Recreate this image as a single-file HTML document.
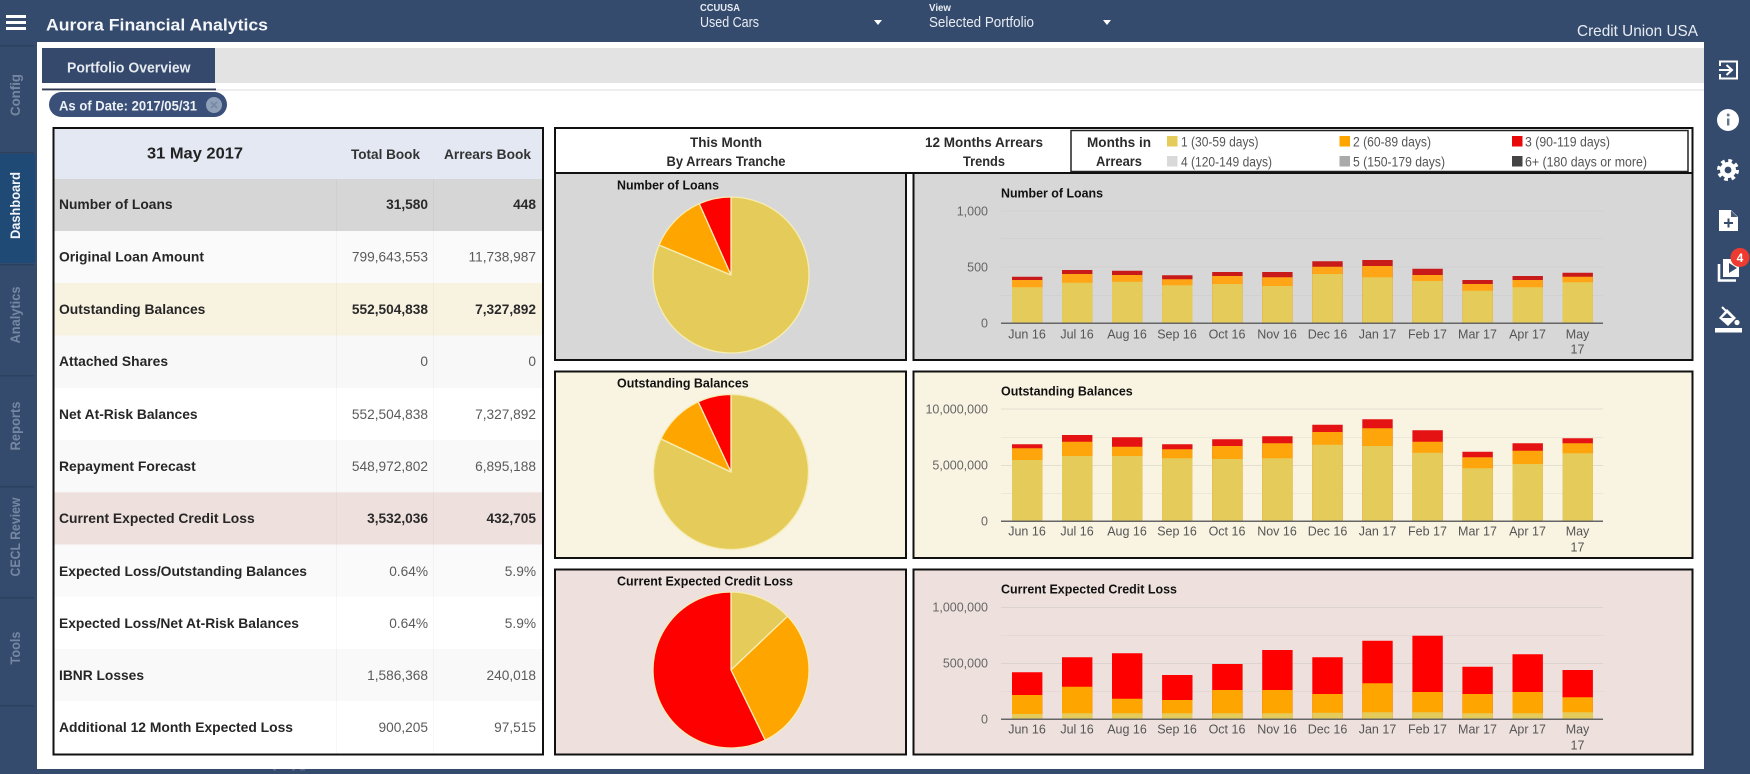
<!DOCTYPE html>
<html lang="en"><head><meta charset="utf-8"><title>Aurora Financial Analytics</title>
<style>
html,body{margin:0;padding:0;width:1750px;height:774px;overflow:hidden;background:#354b6d}
svg{display:block;filter:blur(.3px)}
text{font-family:"Liberation Sans",Arial,sans-serif}
.lb{font-size:14px;font-weight:700;fill:#262626}
.v{font-size:13.7px;fill:#5a5a5a;text-anchor:end}
.vb{font-size:13.7px;font-weight:700;fill:#2a2a2a;text-anchor:end}
.t{font-size:13px;font-weight:700;fill:#111}
.h{font-size:14px;font-weight:700;fill:#2b2b2b;text-anchor:middle}
.lg{font-size:13.5px;fill:#555}
.x{font-size:12.5px;fill:#555;text-anchor:middle}
.y{font-size:12.5px;fill:#666;text-anchor:end}
.nav{font-size:14px;font-weight:700;fill:#7687a2;text-anchor:middle}
</style></head><body>
<svg width="1750" height="774" viewBox="0 0 1750 774" xmlns="http://www.w3.org/2000/svg">
<rect width="1750" height="774" fill="#354b6d"/>
<rect x="37" y="42" width="1667" height="727" fill="#fff"/>
<!-- left nav -->
<rect x="0" y="154" width="35" height="109" fill="#1f4a75"/>
<g fill="#2c4060"><rect x="0" y="45" width="34" height="1.5"/><rect x="0" y="152" width="34" height="1.5"/><rect x="0" y="264" width="34" height="1.5"/><rect x="0" y="375" width="34" height="1.5"/><rect x="0" y="486" width="34" height="1.5"/><rect x="0" y="597" width="34" height="1.5"/><rect x="0" y="705" width="34" height="1.5"/></g>
<g fill="#fff"><rect x="6" y="15" width="20" height="3"/><rect x="6" y="21" width="20" height="3"/><rect x="6" y="27" width="20" height="3"/></g>
<text class="nav" transform="translate(20,95) rotate(-90)" textLength="42" lengthAdjust="spacingAndGlyphs">Config</text>
<text class="nav" transform="translate(20,205.5) rotate(-90)" textLength="67" lengthAdjust="spacingAndGlyphs" style="fill:#f2f5f9">Dashboard</text>
<text class="nav" transform="translate(20,315) rotate(-90)" textLength="57" lengthAdjust="spacingAndGlyphs">Analytics</text>
<text class="nav" transform="translate(20,426) rotate(-90)" textLength="49" lengthAdjust="spacingAndGlyphs">Reports</text>
<text class="nav" transform="translate(20,537) rotate(-90)" textLength="79" lengthAdjust="spacingAndGlyphs">CECL Review</text>
<text class="nav" transform="translate(20,648) rotate(-90)" textLength="33" lengthAdjust="spacingAndGlyphs">Tools</text>
<!-- header -->
<text x="46" y="30.5" font-size="16.5" font-weight="700" fill="#f4f6f9" textLength="222" lengthAdjust="spacingAndGlyphs">Aurora Financial Analytics</text>
<text x="700" y="11" font-size="10" font-weight="700" fill="#e8ecf2" textLength="40" lengthAdjust="spacingAndGlyphs">CCUUSA</text>
<text x="700" y="27" font-size="14.5" fill="#e8ecf2" textLength="59" lengthAdjust="spacingAndGlyphs">Used Cars</text>
<path d="M874 20h8l-4 5z" fill="#fff"/>
<text x="929" y="11" font-size="10" font-weight="700" fill="#e8ecf2" textLength="22" lengthAdjust="spacingAndGlyphs">View</text>
<text x="929" y="27" font-size="14.5" fill="#e8ecf2" textLength="105" lengthAdjust="spacingAndGlyphs">Selected Portfolio</text>
<path d="M1103 20h8l-4 5z" fill="#fff"/>
<text x="1577" y="36" font-size="16" fill="#e8ecf2" textLength="121" lengthAdjust="spacingAndGlyphs">Credit Union USA</text>
<!-- tabs -->
<rect x="215" y="48" width="1489" height="35" fill="#e3e3e3"/>
<rect x="42" y="48" width="173" height="35" fill="#34496b"/>
<rect x="42" y="89" width="1662" height="2" fill="#eeeeee"/>
<rect x="42" y="88.5" width="174" height="1.8" fill="#2f3d52"/>
<text x="67" y="72.5" font-size="14.5" font-weight="700" fill="#e6eaf0" textLength="123.5" lengthAdjust="spacingAndGlyphs">Portfolio Overview</text>
<rect x="49" y="92" width="178" height="25" rx="12.5" fill="#3a5078"/>
<text x="59" y="110.5" font-size="14" font-weight="700" fill="#eef1f5" textLength="138" lengthAdjust="spacingAndGlyphs">As of Date: 2017/05/31</text>
<circle cx="214" cy="105" r="8" fill="#8fa0b8"/><path d="M211 102l6 6M217 102l-6 6" stroke="#7688a3" stroke-width="1.6"/>
<!-- table backgrounds -->
<rect x="54" y="129" width="488" height="50" fill="#e3e8f3"/>
<rect x="54" y="179" width="488" height="52" fill="#d6d6d6"/>
<rect x="54" y="231" width="488" height="52" fill="#fafafa"/>
<rect x="54" y="283" width="488" height="52.5" fill="#f8f2e0"/>
<rect x="54" y="335.5" width="488" height="52.5" fill="#f8f8f8"/>
<rect x="54" y="388" width="488" height="52" fill="#fff"/>
<rect x="54" y="440" width="488" height="52.3" fill="#f9f9f9"/>
<rect x="54" y="492.3" width="488" height="52.2" fill="#eee0dd"/>
<rect x="54" y="544.5" width="488" height="52" fill="#fafafa"/>
<rect x="54" y="596.5" width="488" height="52.5" fill="#fff"/>
<rect x="54" y="649" width="488" height="52" fill="#f9f9f9"/>
<rect x="54" y="701" width="488" height="53" fill="#fff"/>
<rect x="336" y="179" width="1" height="575" fill="#000" opacity=".03"/>
<rect x="433" y="179" width="1" height="575" fill="#000" opacity=".03"/>
<rect x="53.5" y="128" width="489.5" height="626.5" fill="none" stroke="#111" stroke-width="2"/>
<text x="195" y="158.5" font-size="16" font-weight="700" fill="#222" text-anchor="middle" textLength="96" lengthAdjust="spacingAndGlyphs">31 May 2017</text>
<text x="385.5" y="159" font-size="14" font-weight="700" fill="#333" text-anchor="middle" textLength="69" lengthAdjust="spacingAndGlyphs">Total Book</text>
<text x="487.5" y="159" font-size="14" font-weight="700" fill="#333" text-anchor="middle" textLength="87" lengthAdjust="spacingAndGlyphs">Arrears Book</text>
<text class="lb" x="59" y="209" textLength="113.6" lengthAdjust="spacingAndGlyphs">Number of Loans</text><text class="vb" x="428" y="209">31,580</text><text class="vb" x="536" y="209">448</text>
<text class="lb" x="59" y="261.5" textLength="145" lengthAdjust="spacingAndGlyphs">Original Loan Amount</text><text class="v" x="428" y="261.5">799,643,553</text><text class="v" x="536" y="261.5">11,738,987</text>
<text class="lb" x="59" y="314" textLength="146.4" lengthAdjust="spacingAndGlyphs">Outstanding Balances</text><text class="vb" x="428" y="314">552,504,838</text><text class="vb" x="536" y="314">7,327,892</text>
<text class="lb" x="59" y="366" textLength="109" lengthAdjust="spacingAndGlyphs">Attached Shares</text><text class="v" x="428" y="366">0</text><text class="v" x="536" y="366">0</text>
<text class="lb" x="59" y="419" textLength="138.6" lengthAdjust="spacingAndGlyphs">Net At-Risk Balances</text><text class="v" x="428" y="419">552,504,838</text><text class="v" x="536" y="419">7,327,892</text>
<text class="lb" x="59" y="471" textLength="136.8" lengthAdjust="spacingAndGlyphs">Repayment Forecast</text><text class="v" x="428" y="471">548,972,802</text><text class="v" x="536" y="471">6,895,188</text>
<text class="lb" x="59" y="523" textLength="195.7" lengthAdjust="spacingAndGlyphs">Current Expected Credit Loss</text><text class="vb" x="428" y="523">3,532,036</text><text class="vb" x="536" y="523">432,705</text>
<text class="lb" x="59" y="576" textLength="248" lengthAdjust="spacingAndGlyphs">Expected Loss/Outstanding Balances</text><text class="v" x="428" y="576">0.64%</text><text class="v" x="536" y="576">5.9%</text>
<text class="lb" x="59" y="628" textLength="240" lengthAdjust="spacingAndGlyphs">Expected Loss/Net At-Risk Balances</text><text class="v" x="428" y="628">0.64%</text><text class="v" x="536" y="628">5.9%</text>
<text class="lb" x="59" y="680" textLength="85" lengthAdjust="spacingAndGlyphs">IBNR Losses</text><text class="v" x="428" y="680">1,586,368</text><text class="v" x="536" y="680">240,018</text>
<text class="lb" x="59" y="732" textLength="234" lengthAdjust="spacingAndGlyphs">Additional 12 Month Expected Loss</text><text class="v" x="428" y="732">900,205</text><text class="v" x="536" y="732">97,515</text>
<!-- header strip -->
<rect x="555" y="128" width="1137.5" height="45" fill="#fff" stroke="#111" stroke-width="2"/>
<text class="h" x="726" y="147" textLength="72" lengthAdjust="spacingAndGlyphs">This Month</text>
<text class="h" x="726" y="166" textLength="119" lengthAdjust="spacingAndGlyphs">By Arrears Tranche</text>
<text class="h" x="984" y="147" textLength="118" lengthAdjust="spacingAndGlyphs">12 Months Arrears</text>
<text class="h" x="984" y="166" textLength="42" lengthAdjust="spacingAndGlyphs">Trends</text>
<rect x="1071" y="130.5" width="617" height="41" fill="#fff" stroke="#222" stroke-width="1.5"/>
<text class="h" x="1119" y="147" textLength="64" lengthAdjust="spacingAndGlyphs">Months in</text>
<text class="h" x="1119" y="166" textLength="46" lengthAdjust="spacingAndGlyphs">Arrears</text>
<rect x="1167" y="136" width="10.5" height="10.5" fill="#e5cc5a"/><text class="lg" x="1181" y="146.5" textLength="77.5" lengthAdjust="spacingAndGlyphs">1 (30-59 days)</text>
<rect x="1339.5" y="136" width="10.5" height="10.5" fill="#ffa500"/><text class="lg" x="1353" y="146.5" textLength="78" lengthAdjust="spacingAndGlyphs">2 (60-89 days)</text>
<rect x="1512" y="136" width="10.5" height="10.5" fill="#e80a0a"/><text class="lg" x="1525" y="146.5" textLength="85" lengthAdjust="spacingAndGlyphs">3 (90-119 days)</text>
<rect x="1167" y="156" width="10.5" height="10.5" fill="#d9d9d9"/><text class="lg" x="1181" y="166.5" textLength="91" lengthAdjust="spacingAndGlyphs">4 (120-149 days)</text>
<rect x="1339.5" y="156" width="10.5" height="10.5" fill="#aaaaaa"/><text class="lg" x="1353" y="166.5" textLength="92" lengthAdjust="spacingAndGlyphs">5 (150-179 days)</text>
<rect x="1512" y="156" width="10.5" height="10.5" fill="#444444"/><text class="lg" x="1525" y="166.5" textLength="122" lengthAdjust="spacingAndGlyphs">6+ (180 days or more)</text>
<!-- panels -->
<g stroke="#111" stroke-width="2">
<rect x="555" y="173" width="351" height="187" fill="#d7d7d7"/>
<rect x="913.5" y="173" width="779" height="187" fill="#d7d7d7"/>
<rect x="555" y="371.5" width="351" height="186.5" fill="#f9f3e1"/>
<rect x="913.5" y="371.5" width="779" height="186.5" fill="#f9f3e1"/>
<rect x="555" y="569.5" width="351" height="185" fill="#eee1dd"/>
<rect x="913.5" y="569.5" width="779" height="185" fill="#eee1dd"/>
</g>
<!-- pies -->
<text class="t" x="617" y="189.5" textLength="102" lengthAdjust="spacingAndGlyphs">Number of Loans</text>
<g stroke="#f6edb5" stroke-width="1.3" stroke-linejoin="round">
<path d="M731 275L731 197A78 78 0 1 1 659 245Z" fill="#e5cc5a"/>
<path d="M731 275L659 245A78 78 0 0 1 699.3 203.7Z" fill="#ffa500"/>
<path d="M731 275L699.3 203.7A78 78 0 0 1 731 197Z" fill="#f00"/>
</g>
<text class="t" x="617" y="387.5" textLength="131.7" lengthAdjust="spacingAndGlyphs">Outstanding Balances</text>
<g stroke="#f6edb5" stroke-width="1.3" stroke-linejoin="round">
<path d="M731 472L731 394.5A77.5 77.5 0 1 1 660.9 438.9Z" fill="#e5cc5a"/>
<path d="M731 472L660.9 438.9A77.5 77.5 0 0 1 698.2 401.8Z" fill="#ffa500"/>
<path d="M731 472L698.2 401.8A77.5 77.5 0 0 1 731 394.5Z" fill="#f00"/>
</g>
<text class="t" x="617" y="585.5" textLength="176" lengthAdjust="spacingAndGlyphs">Current Expected Credit Loss</text>
<g stroke="#f6edb5" stroke-width="1.3" stroke-linejoin="round">
<path d="M731 670L731 592A78 78 0 0 1 787.6 616.3Z" fill="#e5cc5a"/>
<path d="M731 670L787.6 616.3A78 78 0 0 1 765.2 740.1Z" fill="#ffa500"/>
<path d="M731 670L765.2 740.1A78 78 0 1 1 731 592Z" fill="#f00"/>
</g>
<!-- chart 1 -->
<text class="t" x="1001" y="197.5" textLength="102" lengthAdjust="spacingAndGlyphs">Number of Loans</text>
<g fill="#d1d1d1"><rect x="1001" y="210.5" width="602" height="1"/><rect x="1001" y="238" width="602" height="1"/><rect x="1001" y="266.5" width="602" height="1"/><rect x="1001" y="295" width="602" height="1"/></g>
<text class="y" x="988" y="215.5">1,000</text><text class="y" x="988" y="271.5">500</text><text class="y" x="988" y="327.5">0</text>
<path fill="#c91a1a" d="M1012 276.7h30.4V323h-30.4zM1062 270h30.4V323h-30.4zM1112 270.7h30.4V323h-30.4zM1162.1 275.3h30.4V323h-30.4zM1212.2 272h30.4V323h-30.4zM1262.2 272h30.4V323h-30.4zM1312.3 261.3h30.4V323h-30.4zM1362.3 260h30.4V323h-30.4zM1412.4 268.7h30.4V323h-30.4zM1462.4 280h30.4V323h-30.4zM1512.5 276h30.4V323h-30.4zM1562.5 272.7h30.4V323h-30.4z"/>
<path fill="#ffa516" d="M1012 280h30.4V323h-30.4zM1062 274h30.4V323h-30.4zM1112 275h30.4V323h-30.4zM1162.1 279.3h30.4V323h-30.4zM1212.2 276h30.4V323h-30.4zM1262.2 277.3h30.4V323h-30.4zM1312.3 266.7h30.4V323h-30.4zM1362.3 266h30.4V323h-30.4zM1412.4 275h30.4V323h-30.4zM1462.4 284h30.4V323h-30.4zM1512.5 280h30.4V323h-30.4zM1562.5 276.7h30.4V323h-30.4z"/>
<path fill="#e5cc5a" d="M1012 287.3h30.4V323h-30.4zM1062 282.7h30.4V323h-30.4zM1112 281.7h30.4V323h-30.4zM1162.1 285.3h30.4V323h-30.4zM1212.2 284h30.4V323h-30.4zM1262.2 286h30.4V323h-30.4zM1312.3 274h30.4V323h-30.4zM1362.3 277.3h30.4V323h-30.4zM1412.4 281h30.4V323h-30.4zM1462.4 290.7h30.4V323h-30.4zM1512.5 287.3h30.4V323h-30.4zM1562.5 282.3h30.4V323h-30.4z"/>
<rect x="1001" y="322.5" width="602" height="1.5" fill="#666"/>
<g class="xl"><text class="x" x="1027" y="338.5">Jun 16</text><text class="x" x="1077" y="338.5">Jul 16</text><text class="x" x="1127" y="338.5">Aug 16</text><text class="x" x="1177" y="338.5">Sep 16</text><text class="x" x="1227" y="338.5">Oct 16</text><text class="x" x="1277" y="338.5">Nov 16</text><text class="x" x="1327.5" y="338.5">Dec 16</text><text class="x" x="1377.5" y="338.5">Jan 17</text><text class="x" x="1427.5" y="338.5">Feb 17</text><text class="x" x="1477.5" y="338.5">Mar 17</text><text class="x" x="1527.5" y="338.5">Apr 17</text><text class="x" x="1577.5" y="338.5">May</text><text class="x" x="1577.5" y="353.5">17</text></g>
<!-- chart 2 -->
<text class="t" x="1001" y="395.5" textLength="131.7" lengthAdjust="spacingAndGlyphs">Outstanding Balances</text>
<g fill="#e2dfcf"><rect x="1001" y="408.5" width="602" height="1"/><rect x="1001" y="437" width="602" height="1" opacity=".6"/><rect x="1001" y="465" width="602" height="1"/><rect x="1001" y="493" width="602" height="1" opacity=".6"/></g>
<text class="y" x="988" y="413.5">10,000,000</text><text class="y" x="988" y="469.5">5,000,000</text><text class="y" x="988" y="525.5">0</text>
<path fill="#e41212" d="M1012 444.3h30.4V521h-30.4zM1062 435h30.4V521h-30.4zM1112 437.3h30.4V521h-30.4zM1162.1 444.3h30.4V521h-30.4zM1212.2 439.3h30.4V521h-30.4zM1262.2 436.3h30.4V521h-30.4zM1312.3 424.7h30.4V521h-30.4zM1362.3 419.3h30.4V521h-30.4zM1412.4 430.3h30.4V521h-30.4zM1462.4 451.7h30.4V521h-30.4zM1512.5 443.3h30.4V521h-30.4zM1562.5 438.3h30.4V521h-30.4z"/>
<path fill="#ffa50c" d="M1012 448.3h30.4V521h-30.4zM1062 441.7h30.4V521h-30.4zM1112 446.7h30.4V521h-30.4zM1162.1 449.3h30.4V521h-30.4zM1212.2 446h30.4V521h-30.4zM1262.2 443.3h30.4V521h-30.4zM1312.3 432h30.4V521h-30.4zM1362.3 428.3h30.4V521h-30.4zM1412.4 441.7h30.4V521h-30.4zM1462.4 457.3h30.4V521h-30.4zM1512.5 450.7h30.4V521h-30.4zM1562.5 443.3h30.4V521h-30.4z"/>
<path fill="#e5cc5a" d="M1012 460h30.4V521h-30.4zM1062 456h30.4V521h-30.4zM1112 456h30.4V521h-30.4zM1162.1 458.3h30.4V521h-30.4zM1212.2 459h30.4V521h-30.4zM1262.2 458.3h30.4V521h-30.4zM1312.3 444.7h30.4V521h-30.4zM1362.3 446h30.4V521h-30.4zM1412.4 452.7h30.4V521h-30.4zM1462.4 468.3h30.4V521h-30.4zM1512.5 464h30.4V521h-30.4zM1562.5 453.3h30.4V521h-30.4z"/>
<rect x="1001" y="520.5" width="602" height="1.5" fill="#666"/>
<g><text class="x" x="1027" y="535.5">Jun 16</text><text class="x" x="1077" y="535.5">Jul 16</text><text class="x" x="1127" y="535.5">Aug 16</text><text class="x" x="1177" y="535.5">Sep 16</text><text class="x" x="1227" y="535.5">Oct 16</text><text class="x" x="1277" y="535.5">Nov 16</text><text class="x" x="1327.5" y="535.5">Dec 16</text><text class="x" x="1377.5" y="535.5">Jan 17</text><text class="x" x="1427.5" y="535.5">Feb 17</text><text class="x" x="1477.5" y="535.5">Mar 17</text><text class="x" x="1527.5" y="535.5">Apr 17</text><text class="x" x="1577.5" y="535.5">May</text><text class="x" x="1577.5" y="551.5">17</text></g>
<!-- chart 3 -->
<text class="t" x="1001" y="593.5" textLength="176" lengthAdjust="spacingAndGlyphs">Current Expected Credit Loss</text>
<g fill="#dcd3d0"><rect x="1001" y="607" width="602" height="1"/><rect x="1001" y="635" width="602" height="1" opacity=".6"/><rect x="1001" y="663" width="602" height="1"/><rect x="1001" y="691" width="602" height="1" opacity=".6"/></g>
<text class="y" x="988" y="611.5">1,000,000</text><text class="y" x="988" y="667.5">500,000</text><text class="y" x="988" y="723.5">0</text>
<path fill="#f00" d="M1012 672.3h30.4V719h-30.4zM1062 657.3h30.4V719h-30.4zM1112 653.3h30.4V719h-30.4zM1162.1 675h30.4V719h-30.4zM1212.2 664h30.4V719h-30.4zM1262.2 650h30.4V719h-30.4zM1312.3 657.3h30.4V719h-30.4zM1362.3 640.7h30.4V719h-30.4zM1412.4 635.7h30.4V719h-30.4zM1462.4 666.7h30.4V719h-30.4zM1512.5 654.3h30.4V719h-30.4zM1562.5 670h30.4V719h-30.4z"/>
<path fill="#ffa500" d="M1012 695h30.4V719h-30.4zM1062 686.7h30.4V719h-30.4zM1112 698.7h30.4V719h-30.4zM1162.1 700h30.4V719h-30.4zM1212.2 690h30.4V719h-30.4zM1262.2 690h30.4V719h-30.4zM1312.3 694h30.4V719h-30.4zM1362.3 683.3h30.4V719h-30.4zM1412.4 692h30.4V719h-30.4zM1462.4 694h30.4V719h-30.4zM1512.5 692h30.4V719h-30.4zM1562.5 697.3h30.4V719h-30.4z"/>
<path fill="#e5cc5a" d="M1012 714h30.4V719h-30.4zM1062 713.3h30.4V719h-30.4zM1112 713.3h30.4V719h-30.4zM1162.1 713.3h30.4V719h-30.4zM1212.2 713.3h30.4V719h-30.4zM1262.2 713.3h30.4V719h-30.4zM1312.3 712.7h30.4V719h-30.4zM1362.3 712.3h30.4V719h-30.4zM1412.4 712.3h30.4V719h-30.4zM1462.4 713.3h30.4V719h-30.4zM1512.5 713.3h30.4V719h-30.4zM1562.5 712.3h30.4V719h-30.4z"/>
<rect x="1001" y="718.5" width="602" height="1.5" fill="#666"/>
<g><text class="x" x="1027" y="733.5">Jun 16</text><text class="x" x="1077" y="733.5">Jul 16</text><text class="x" x="1127" y="733.5">Aug 16</text><text class="x" x="1177" y="733.5">Sep 16</text><text class="x" x="1227" y="733.5">Oct 16</text><text class="x" x="1277" y="733.5">Nov 16</text><text class="x" x="1327.5" y="733.5">Dec 16</text><text class="x" x="1377.5" y="733.5">Jan 17</text><text class="x" x="1427.5" y="733.5">Feb 17</text><text class="x" x="1477.5" y="733.5">Mar 17</text><text class="x" x="1527.5" y="733.5">Apr 17</text><text class="x" x="1577.5" y="733.5">May</text><text class="x" x="1577.5" y="749.5">17</text></g>
<!-- bottom fragment -->
<g fill="#5a6a82"><rect x="273" y="769" width="3" height="1.5"/><rect x="292" y="769" width="3" height="1.5"/><rect x="300" y="769" width="5" height="1.5"/></g>
<!-- right icons -->
<path d="M1720 66V61.5H1737V78.5H1720V74" fill="none" stroke="#fff" stroke-width="2"/>
<path d="M1719 70H1731M1726.5 65L1732 70L1726.5 75" fill="none" stroke="#fff" stroke-width="2"/>
<circle cx="1728" cy="120" r="11" fill="#fff"/>
<rect x="1727" y="118.5" width="2.4" height="7" fill="#6a7488"/><circle cx="1728.2" cy="115" r="1.5" fill="#6a7488"/>
<circle cx="1728" cy="170" r="8" fill="#fff"/>
<circle cx="1728" cy="170" r="9" fill="none" stroke="#fff" stroke-width="4" stroke-dasharray="3.6 3.47"/>
<circle cx="1728" cy="170" r="3.4" fill="#354b6d"/>
<path d="M1719 210H1731L1738 217V231H1719Z" fill="#fff"/>
<path d="M1731 210.5V217H1737.5Z" fill="#354b6d" opacity=".9"/>
<path d="M1728.5 218.5V227.5M1724 223H1733" stroke="#354b6d" stroke-width="2"/>
<path d="M1719 264V280.5H1736" fill="none" stroke="#fff" stroke-width="2.6"/>
<rect x="1723" y="259" width="16" height="18" fill="#fff"/>
<path d="M1729 263L1737 268L1729 273Z" fill="#354b6d"/>
<circle cx="1740" cy="257.5" r="9.5" fill="#ee3b32"/>
<text x="1740" y="262" font-size="12" font-weight="700" fill="#fff" text-anchor="middle">4</text>
<path d="M1727 309L1736 318L1728 326L1719 318Z" fill="#fff"/>
<path d="M1727 313L1732 318H1722Z" fill="#354b6d"/>
<path d="M1722 307L1727 312" stroke="#fff" stroke-width="2"/>
<circle cx="1737" cy="322.5" r="2.6" fill="#fff"/>
<rect x="1715" y="328" width="27" height="4.5" fill="#fff"/>
</svg>
</body></html>
